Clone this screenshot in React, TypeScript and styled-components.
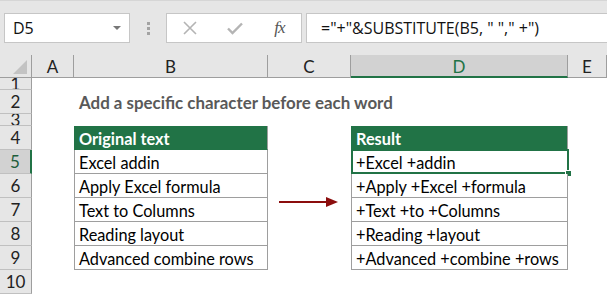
import React from 'react';
import styled, { createGlobalStyle } from 'styled-components';

const GREEN = '#217346';
const GRID_LINE = '#9e9e9e';
const HEAD_BG = '#e6e6e6';

const GlobalStyle = createGlobalStyle`
  html, body {
    margin: 0;
    padding: 0;
    background: #fff;
  }
  body {
    width: 607px;
    height: 294px;
    overflow: hidden;
  }
`;

const Window = styled.div`
  width: 607px;
  height: 294px;
  display: flex;
  flex-direction: column;
  overflow: hidden;
  background: #fff;
`;

const FormulaBar = styled.div`
  flex: 0 0 55px;
  box-sizing: border-box;
  display: flex;
  align-items: flex-start;
  padding: 12px 0 0 4px;
  background: ${HEAD_BG};
  border-top: 1px solid #d6d6d6;
`;

const NameBox = styled.div`
  box-sizing: border-box;
  width: 126px;
  height: 30px;
  display: flex;
  align-items: center;
  justify-content: space-between;
  padding: 0 8px 0 8px;
  background: #fff;
  border: 1px solid #c6c6c6;
  font: 16px 'Open Sans', sans-serif;
  color: #111;
`;

const DropArrow = styled.span`
  width: 0;
  height: 0;
  border-left: 4px solid transparent;
  border-right: 4px solid transparent;
  border-top: 4px solid #777;
`;

const Dots = styled.div`
  display: flex;
  flex-direction: column;
  gap: 2px;
  margin: 9px 0 0 17px;

  span {
    width: 3px;
    height: 3px;
    background: #a3a3a3;
  }
`;

const ButtonsBox = styled.div`
  box-sizing: border-box;
  width: 136px;
  height: 30px;
  margin-left: 16px;
  display: grid;
  grid-template-columns: repeat(3, 45px);
  justify-items: center;
  align-items: center;
  background: #fff;
  border: 1px solid #c6c6c6;
`;

const Fx = styled.span`
  font: italic 17px 'Liberation Serif', serif;
  color: #555;
  letter-spacing: -1px;
`;

const FormulaBox = styled.div`
  box-sizing: border-box;
  flex: 1;
  height: 30px;
  margin-left: 4px;
  display: flex;
  align-items: center;
  padding-left: 14px;
  background: #fff;
  border: 1px solid #c6c6c6;
  border-right: none;
  font: 16px 'Open Sans', sans-serif;
  color: #111;
  white-space: nowrap;
`;

const Sheet = styled.div`
  display: grid;
  grid-template-columns: 32px 42px 194px 83px 217px 39px;
  grid-template-rows: 23px 12px 24px 12px repeat(7, 24px);
  font-family: Lato, 'Liberation Sans', sans-serif;
`;

const Corner = styled.div`
  position: relative;
  background: ${HEAD_BG};
  border-right: 1px solid ${GRID_LINE};
  border-bottom: 1px solid ${GRID_LINE};

  &::after {
    content: '';
    position: absolute;
    right: 4px;
    bottom: 3px;
    width: 0;
    height: 0;
    border-left: 14px solid transparent;
    border-bottom: 14px solid #c3c3c3;
  }
`;

const ColHeader = styled.div<{ $active?: boolean }>`
  box-sizing: border-box;
  display: flex;
  align-items: center;
  justify-content: center;
  background: ${p => (p.$active ? '#d2d2d2' : HEAD_BG)};
  border-right: 1px solid ${GRID_LINE};
  border-bottom: ${p => (p.$active ? `2px solid ${GREEN}` : `1px solid ${GRID_LINE}`)};
  color: ${p => (p.$active ? GREEN : '#222')};
  font-size: 17px;
  padding-top: 1px;
`;

const RowHeader = styled.div<{ $active?: boolean; $short?: boolean }>`
  box-sizing: border-box;
  display: flex;
  align-items: center;
  justify-content: center;
  overflow: hidden;
  background: ${p => (p.$active ? '#d2d2d2' : HEAD_BG)};
  border-right: ${p => (p.$active ? `2px solid ${GREEN}` : `1px solid ${GRID_LINE}`)};
  border-bottom: 1px solid #c0c0c0;
  color: ${p => (p.$active ? '#1e5e3b' : '#222')};
  font-size: 17px;
  line-height: ${p => (p.$short ? '11px' : '24px')};
`;

const Cell = styled.div`
  min-width: 0;
  position: relative;
`;

const Title = styled.div`
  display: flex;
  align-items: center;
  height: 100%;
  padding-left: 5px;
  font-size: 16.9px;
  font-weight: 700;
  color: #595959;
  white-space: nowrap;
`;

const TableCell = styled.div<{ $head?: boolean }>`
  box-sizing: border-box;
  position: relative;
  display: flex;
  align-items: center;
  padding: 1px 0 0 4px;
  white-space: nowrap;
  font-size: 16.3px;
  font-weight: ${p => (p.$head ? 700 : 400)};
  color: ${p => (p.$head ? '#fff' : '#000')};
  background: ${p => (p.$head ? GREEN : '#fff')};
  border-left: 1px solid ${p => (p.$head ? GREEN : GRID_LINE)};
  border-right: 1px solid ${GRID_LINE};
  border-bottom: 1px solid ${p => (p.$head ? GREEN : GRID_LINE)};
`;

const Selection = styled.div`
  position: absolute;
  top: -1px;
  left: -1px;
  right: -2px;
  bottom: -1px;
  border: 2px solid ${GREEN};
  pointer-events: none;
`;

const FillHandle = styled.div`
  position: absolute;
  right: -5px;
  bottom: -5px;
  width: 5px;
  height: 5px;
  background: ${GREEN};
  border: 1px solid #fff;
`;

const Arrow = styled.svg`
  display: block;
  margin: -2px 0 0 11px;
`;

const XIcon = () => (
  <svg width="14" height="14" viewBox="0 0 14 14">
    <path d="M1 1 L13 13 M13 1 L1 13" stroke="#b4b4b4" strokeWidth="1.6" fill="none" />
  </svg>
);

const CheckIcon = () => (
  <svg width="16" height="13" viewBox="0 0 16 13">
    <path d="M1 6.5 L5.5 11 L15 1.5" stroke="#b4b4b4" strokeWidth="2.4" fill="none" />
  </svg>
);

const source = ['Excel addin', 'Apply Excel formula', 'Text to Columns', 'Reading layout', 'Advanced combine rows'];
const toResult = (s: string) => s.split(' ').map(w => '+' + w).join(' ');

export default function App(): JSX.Element {
  const rows: React.ReactNode[] = [];

  for (let r = 1; r <= 10; r++) {
    const cells: React.ReactNode[] = [<Cell key="a" />];
    const dataIndex = r - 5;

    if (r === 2) {
      cells.push(
        <Cell key="b">
          <Title>Add a specific character before each word</Title>
        </Cell>,
        <Cell key="c" />,
        <Cell key="d" />
      );
    } else if (r === 4) {
      cells.push(
        <TableCell key="b" $head>Original text</TableCell>,
        <Cell key="c" />,
        <TableCell key="d" $head>Result</TableCell>
      );
    } else if (dataIndex >= 0 && dataIndex < source.length) {
      cells.push(
        <TableCell key="b">{source[dataIndex]}</TableCell>,
        <Cell key="c">
          {r === 7 && (
            <Arrow width="60" height="12" viewBox="0 0 60 12">
              <path d="M0 6 L50 6" stroke="#8b0d0d" strokeWidth="2.2" />
              <polygon points="47,1 59,6 47,11" fill="#8b0d0d" />
            </Arrow>
          )}
        </Cell>,
        <TableCell key="d">
          {toResult(source[dataIndex])}
          {r === 5 && (
            <Selection>
              <FillHandle />
            </Selection>
          )}
        </TableCell>
      );
    } else {
      cells.push(<Cell key="b" />, <Cell key="c" />, <Cell key="d" />);
    }
    cells.push(<Cell key="e" />);

    rows.push(
      <React.Fragment key={r}>
        <RowHeader $active={r === 5} $short={r === 1 || r === 3}>
          {r}
        </RowHeader>
        {cells}
      </React.Fragment>
    );
  }

  return (
    <Window>
      <GlobalStyle />
      <FormulaBar>
        <NameBox>
          D5
          <DropArrow />
        </NameBox>
        <Dots>
          <span />
          <span />
          <span />
        </Dots>
        <ButtonsBox>
          <XIcon />
          <CheckIcon />
          <Fx>fx</Fx>
        </ButtonsBox>
        <FormulaBox>{'="+"&SUBSTITUTE(B5, " "," +")'}</FormulaBox>
      </FormulaBar>
      <Sheet>
        <Corner />
        {['A', 'B', 'C', 'D', 'E'].map(c => (
          <ColHeader key={c} $active={c === 'D'}>
            {c}
          </ColHeader>
        ))}
        {rows}
      </Sheet>
    </Window>
  );
}
